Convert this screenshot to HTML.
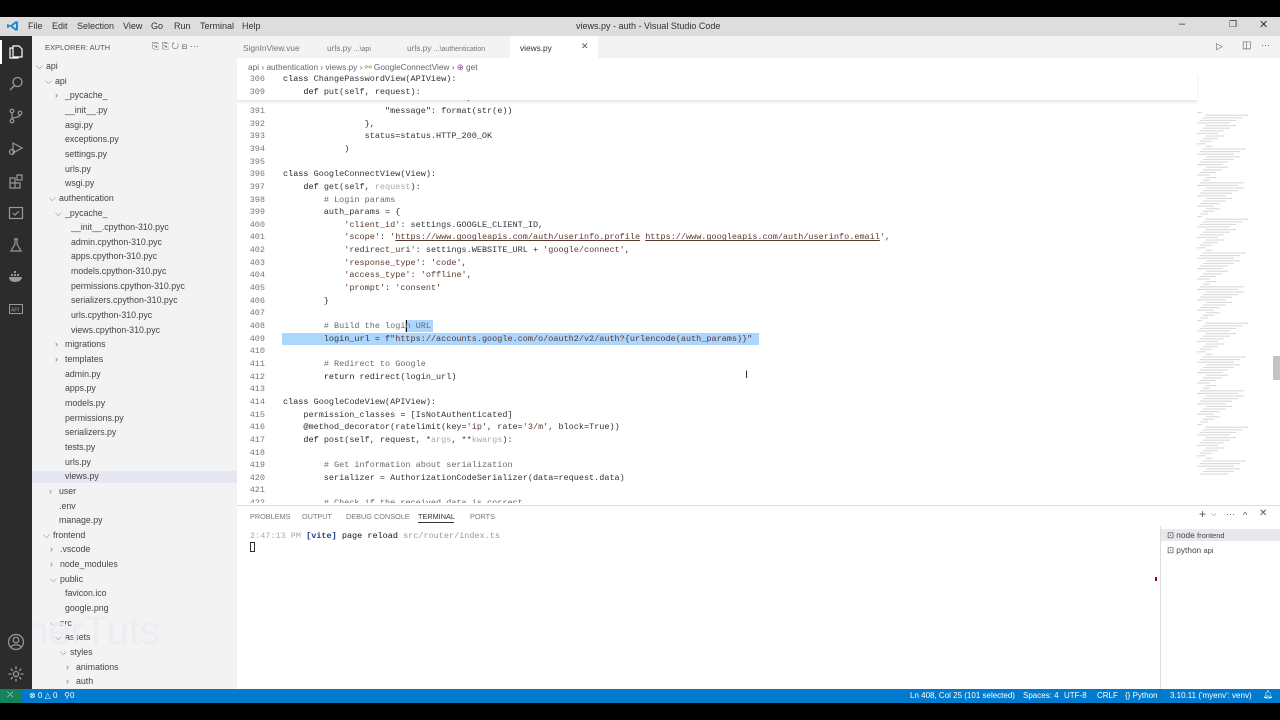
<!DOCTYPE html>
<html><head><meta charset="utf-8">
<style>
*{margin:0;padding:0;box-sizing:border-box}
body{width:1280px;height:720px;overflow:hidden;background:#000;font-family:"Liberation Sans",sans-serif;position:relative}
.a{position:absolute;white-space:pre}
#title{position:absolute;left:0;top:17px;width:1280px;height:19px;background:#dddddd;font-size:9px;color:#333}
#act{position:absolute;left:0;top:36px;width:32px;height:653px;background:#2c2c2c}
#side{position:absolute;left:32px;top:36px;width:205px;height:653px;background:#f3f3f3;font-size:8.8px;color:#444;overflow:hidden}
#ed{position:absolute;left:237px;top:36px;width:1043px;height:653px;background:#fff;overflow:hidden}
.code{font-family:"Liberation Mono",monospace;font-size:8.5px;color:#333}
.ln{color:#777;width:28px;text-align:right;left:0}
.s{color:#5a3a30}.c{color:#6a6a6a}.k{color:#1f1f1f}.p{color:#aaa}
#status{position:absolute;left:0;top:689px;width:1280px;height:14px;background:#007acc;color:#fff;font-size:8px}
.tree div{position:absolute;white-space:pre;line-height:12px}
</style></head><body>
<div id="title">
 <svg class="a" style="left:7px;top:3px" width="12" height="12" viewBox="0 0 12 12"><path d="M9 1 L11 2 V10 L9 11 L3 6.5 L1 8 L0 7.5 V4.5 L1 4 L3 5.5 Z M9 3.5 L5.5 6 L9 8.5 Z" fill="#1e88d6"/></svg>
 <span class="a" style="left:28px;top:4px">File</span><span class="a" style="left:52px;top:4px">Edit</span><span class="a" style="left:77px;top:4px">Selection</span><span class="a" style="left:123px;top:4px">View</span><span class="a" style="left:151px;top:4px">Go</span><span class="a" style="left:174px;top:4px">Run</span><span class="a" style="left:200px;top:4px">Terminal</span><span class="a" style="left:242px;top:4px">Help</span>
 <span class="a" style="left:576px;top:4px">views.py - auth - Visual Studio Code</span>
 <span class="a" style="left:1179px;top:1px;font-size:11px">–</span><span class="a" style="left:1229px;top:2px;font-size:9px">❐</span><span class="a" style="left:1259px;top:1px;font-size:11px">✕</span>
</div>
<div id="act">
 <div class="a" style="left:0;top:4px;width:2px;height:24px;background:#fff"></div>
 <svg class="a" style="left:8px;top:7px" width="16" height="16" viewBox="0 0 16 16" fill="none" stroke="#fff" stroke-width="1.2"><path d="M5 3h6l3 3v8H5z M5 5H2v10h8v-1"/></svg>
 <svg class="a" style="left:8px;top:40px" width="16" height="16" viewBox="0 0 16 16" fill="none" stroke="#999" stroke-width="1.3"><circle cx="9.5" cy="6" r="4.5"/><path d="M6.5 9.5L2 14"/></svg>
 <svg class="a" style="left:8px;top:72px" width="16" height="16" viewBox="0 0 16 16" fill="none" stroke="#999" stroke-width="1.2"><circle cx="4" cy="3" r="1.8"/><circle cx="4" cy="13" r="1.8"/><circle cx="12" cy="5" r="1.8"/><path d="M4 5v6M12 7c0 3-8 2-8 4"/></svg>
 <svg class="a" style="left:8px;top:104px" width="16" height="16" viewBox="0 0 16 16" fill="none" stroke="#999" stroke-width="1.2"><path d="M5 3l9 5-9 5z"/><circle cx="4" cy="12" r="2.5"/></svg>
 <svg class="a" style="left:8px;top:137px" width="16" height="16" viewBox="0 0 16 16" fill="none" stroke="#999" stroke-width="1.2"><path d="M2 5h5v5H2zM7 10h5v5H7zM2 10h5v5H2zM9 2h5v5H9z"/></svg>
 <svg class="a" style="left:8px;top:169px" width="16" height="16" viewBox="0 0 16 16" fill="none" stroke="#999" stroke-width="1.2"><rect x="1.5" y="2.5" width="13" height="11"/><path d="M5 8l2 2 4-4"/></svg>
 <svg class="a" style="left:8px;top:201px" width="16" height="16" viewBox="0 0 16 16" fill="none" stroke="#999" stroke-width="1.2"><path d="M6 2h4M7 2v5L3 14h10L9 7V2"/></svg>
 <svg class="a" style="left:8px;top:233px" width="16" height="16" viewBox="0 0 16 16" fill="#999"><path d="M1 8h13c0 3-3 5-7 5S1 11 1 8zM3 5h2v2H3zM6 5h2v2H6zM9 5h2v2H9zM6 2h2v2H6z"/></svg>
 <svg class="a" style="left:8px;top:265px" width="16" height="16" viewBox="0 0 16 16" fill="none" stroke="#999" stroke-width="1"><rect x="1.5" y="3.5" width="13" height="9"/><text x="3" y="10.5" font-size="5" fill="#999" stroke="none" font-family="Liberation Sans">API</text></svg>
 <svg class="a" style="left:7px;top:597px" width="18" height="18" viewBox="0 0 18 18" fill="none" stroke="#999" stroke-width="1.2"><circle cx="9" cy="9" r="7.5"/><circle cx="9" cy="7" r="2.8"/><path d="M4 14c2-3 8-3 10 0"/></svg>
 <svg class="a" style="left:7px;top:629px" width="18" height="18" viewBox="0 0 18 18" fill="none" stroke="#999" stroke-width="1.3"><circle cx="9" cy="9" r="2.5"/><path d="M9 1.5v3M9 13.5v3M1.5 9h3M13.5 9h3M3.7 3.7l2.1 2.1M12.2 12.2l2.1 2.1M3.7 14.3l2.1-2.1M12.2 5.8l2.1-2.1"/></svg>
</div>
<div id="side">
 <span class="a" style="left:13px;top:7px;font-size:7.5px;color:#555">EXPLORER: AUTH</span>
 <span class="a" style="left:120px;top:5px;font-size:9px;color:#555">⎘ ⎘ ↻ ⊟ ···</span>
 <div class="a" style="left:0;top:435px;width:205px;height:12px;background:#e4e6f1"></div>
 <div class="tree" id="tr"></div>
 <span class="a" style="left:-6px;top:573px;font-size:40px;color:#f0eaf2">nerTuts</span>
</div>
<div id="ed">
 <div style="position:absolute;left:0;top:0;width:1043px;height:22px;background:#f3f3f3;font-size:8.3px;color:#777"></div>
 <span class="a" style="left:6px;top:7px;font-size:8.3px;color:#777">SignInView.vue</span>
 <span class="a" style="left:90px;top:7px;font-size:8.3px;color:#777">urls.py <span style="font-size:7px">...\api</span></span>
 <span class="a" style="left:170px;top:7px;font-size:8.3px;color:#777">urls.py <span style="font-size:7px">...\authentication</span></span>
 <div class="a" style="left:273px;top:0;width:88px;height:22px;background:#fff"></div>
 <span class="a" style="left:283px;top:7px;font-size:8.3px;color:#333">views.py</span>
 <span class="a" style="left:344px;top:5px;font-size:9px;color:#555">✕</span>
 <span class="a" style="left:979px;top:5px;font-size:9px;color:#555">▷</span><span class="a" style="left:1005px;top:4px;font-size:10px;color:#555">◫</span><span class="a" style="left:1024px;top:4px;font-size:9px;color:#555">···</span>
 <span class="a" style="left:11px;top:26px;font-size:8.3px;color:#666">api › authentication › views.py › <span style="color:#c08a20">⚯</span> GoogleConnectView › <span style="color:#8250a0">⊕</span> get</span>
 <div class="code" id="code" style="position:absolute;left:0;top:0;width:1043px;height:467px;overflow:hidden"></div>
 <div class="a" style="left:0;top:37px;width:960px;height:27px;background:#fff;box-shadow:0 2px 3px rgba(0,0,0,.12)"></div>
 <div class="code">
  <span class="a ln" style="top:38px">306</span><span class="a" style="left:46px;top:38px"><span class="k">class</span> ChangePasswordView(APIView):</span>
  <span class="a ln" style="top:51px">309</span><span class="a" style="left:46px;top:51px">    <span class="k">def</span> put(self, request):</span>
 </div>
 <svg class="a" style="left:955px;top:36px" width="80" height="430"><g fill="#dcdcdc" id="mm"></g></svg>
 <div class="a" style="left:1036px;top:320px;width:7px;height:24px;background:#c4c4c4"></div>
 <span class="a" style="left:508px;top:333px;font-size:11px;color:#333">I</span>
 <div class="a" style="left:0;top:469px;width:1043px;height:1px;background:#ddd"></div>
 <div style="font-size:7.3px;color:#777">
  <span class="a" style="left:13px;top:476px">PROBLEMS</span><span class="a" style="left:65px;top:476px">OUTPUT</span><span class="a" style="left:109px;top:476px">DEBUG CONSOLE</span><span class="a" style="left:181px;top:476px;color:#333">TERMINAL</span><span class="a" style="left:233px;top:476px">PORTS</span>
  <div class="a" style="left:181px;top:486px;width:36px;height:1px;background:#333"></div>
 </div>
 <span class="a" style="left:962px;top:471px;font-size:12px;color:#555">+</span><span class="a" style="left:974px;top:475px;font-size:7px;color:#555">⌵</span><span class="a" style="left:989px;top:473px;font-size:9px;color:#555">···</span><span class="a" style="left:1006px;top:474px;font-size:9px;color:#555">^</span><span class="a" style="left:1022px;top:472px;font-size:10px;color:#555">✕</span>
 <div class="code"><span class="a" style="left:13px;top:495px"><span style="color:#aaa">2:47:13 PM</span> <b style="color:#1d3d8a">[vite]</b> <span style="color:#111">page reload</span> <span style="color:#999">src/router/index.ts</span></span>
 <div class="a" style="left:13px;top:506px;width:5px;height:10px;border:1px solid #333"></div></div>
 <div class="a" style="left:923px;top:490px;width:1px;height:163px;background:#ddd"></div>
 <div class="a" style="left:924px;top:493px;width:119px;height:12px;background:#e8e8ee"></div>
 <span class="a" style="left:930px;top:494px;font-size:8.3px;color:#444">⊡ node <span style="font-size:7.5px">frontend</span></span>
 <span class="a" style="left:930px;top:509px;font-size:8.3px;color:#444">⊡ python <span style="font-size:7.5px">api</span></span>
 <div class="a" style="left:918px;top:541px;width:2px;height:4px;background:#a00"></div>
</div>
<div id="status">
 <div class="a" style="left:0;top:0;width:22px;height:14px;background:#16825d"></div>
 <span class="a" style="left:7px;top:1px">⤫</span>
 <span class="a" style="left:29px;top:2px">⊗ 0 △ 0 &nbsp; ⚲0</span>
 <span class="a" style="left:910px;top:2px">Ln 408, Col 25 (101 selected)</span><span class="a" style="left:1023px;top:2px">Spaces: 4</span><span class="a" style="left:1064px;top:2px">UTF-8</span><span class="a" style="left:1097px;top:2px">CRLF</span><span class="a" style="left:1125px;top:2px">{} Python</span><span class="a" style="left:1170px;top:2px">3.10.11 ('myenv': venv)</span><span class="a" style="left:1263px;top:1px">🔔︎</span>
</div>
<script>
var items=[["api",14,"v"],["api",23,"v"],["_pycache_",33,">"],["__init__.py",33],["asgi.py",33],["exceptions.py",33],["settings.py",33],["urls.py",33],["wsgi.py",33],["authentication",27,"v"],["_pycache_",33,"v"],["__init__.cpython-310.pyc",39],["admin.cpython-310.pyc",39],["apps.cpython-310.pyc",39],["models.cpython-310.pyc",39],["permissions.cpython-310.pyc",39],["serializers.cpython-310.pyc",39],["urls.cpython-310.pyc",39],["views.cpython-310.pyc",39],["migrations",33,">"],["templates",33,">"],["admin.py",33],["apps.py",33],["models.py",33],["permissions.py",33],["serializers.py",33],["tests.py",33],["urls.py",33],["views.py",33],["user",27,">"],[".env",27],["manage.py",27],["frontend",21,"v"],[".vscode",28,">"],["node_modules",28,">"],["public",28,"v"],["favicon.ico",33],["google.png",33],["src",28,"v"],["assets",33,"v"],["styles",38,"v"],["animations",44,">"],["auth",44,">"]];
var h="";items.forEach(function(it,i){var t=24+i*14.65;if(it[2])h+='<div style="left:'+(it[1]-10)+'px;top:'+t+'px;color:#777">'+(it[2]=="v"?"⌵":"›")+'</div>';h+='<div style="left:'+it[1]+'px;top:'+t+'px">'+it[0]+'</div>';});
document.getElementById("tr").innerHTML=h;
var L={390:'                    "success": False,',391:'                    "message": format(str(e))',392:'                },',393:'                status=status.HTTP_200_OK',394:'            )',395:'',396:'<k>class</k> GoogleConnectView(View):',397:'    <k>def</k> get(self, <p>request</p>):',398:'        <c># Login params</c>',399:'        auth_params = {',400:"            <s>'client_id'</s>: settings.GOOGLE_CLIENT_ID,",401:"            <s>'scope'</s>: <s>'<u>https://www.googleapis.com/auth/userinfo.profile</u> <u>https://www.googleapis.com/auth/userinfo.email</u>'</s>,",402:"            <s>'redirect_uri'</s>: settings.WEBSITE_URL + <s>'google/connect'</s>,",403:"            <s>'response_type'</s>: <s>'code'</s>,",404:"            <s>'access_type'</s>: <s>'offline'</s>,",405:"            <s>'prompt'</s>: <s>'consent'</s>",406:'        }',407:'',408:'        <c># Build the login URL</c>',409:'        login_url = f<s>"https://accounts.google.com/o/oauth2/v2/auth?{urlencode(auth_params)}"</s>',410:'',411:'        <c># Redirect to Google</c>',412:'        <k>return</k> redirect(login_url)',413:'',414:'<k>class</k> GoogleCodeView(APIView):',415:'    permission_classes = [IsNotAuthenticated]',416:"    @method_decorator(ratelimit(key=<s>'ip'</s>, rate=<s>'3/m'</s>, block=True))",417:'    <k>def</k> post(self, request, *<p>args</p>, **<p>kwargs</p>):',418:'',419:'        <c># Get information about serialization</c>',420:'        serializer = AuthorizationCodeSerializer(data=request.data)',421:'',422:'        <c># Check if the received data is correct</c>'};
var c='<div class="a" style="left:45px;top:297px;width:477px;height:12px;background:#add6ff"></div><div class="a" style="left:168px;top:284px;width:28px;height:12px;background:#add6ff"></div><div class="a" style="left:169px;top:284px;width:1px;height:12px;background:#000"></div>';
for(var n=390;n<=422;n++){var t=57.3+(n-390)*12.65;var s=L[n].replace(/<(\/?)(k|c|s|p)>/g,function(m,sl,tg){return sl?'</span>':'<span class="'+tg+'">';});c+='<span class="a ln" style="top:'+t+'px">'+n+'</span><span class="a" style="left:46px;top:'+t+'px">'+s+'</span>';}
document.getElementById("code").innerHTML=c;
var m="";for(var i=0;i<140;i++){var w=5+((i*37)%40);m+='<rect x="'+(5+((i*7)%4)*3)+'" y="'+(40+i*2.6)+'" width="'+w+'" height="1.2"/>';}
document.getElementById("mm").innerHTML=m;
</script>
</body></html>
